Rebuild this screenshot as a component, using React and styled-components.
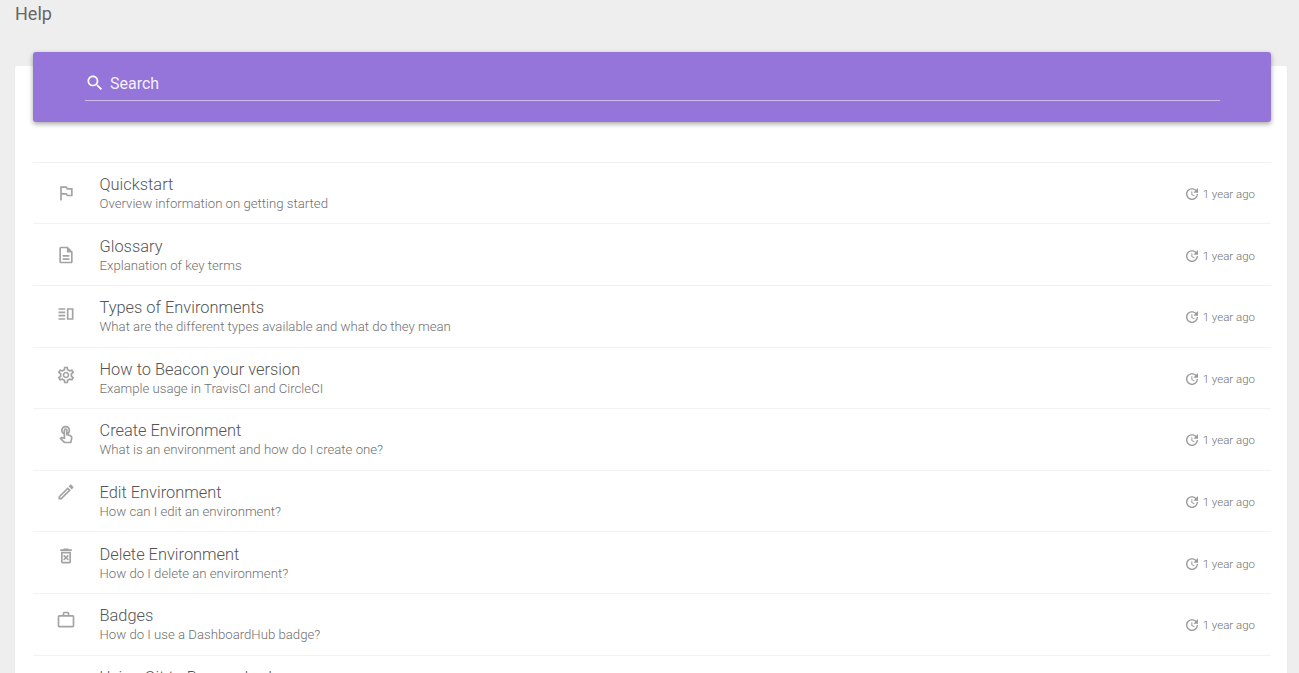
import React from 'react';
import styled, { createGlobalStyle } from 'styled-components';

const GlobalStyle = createGlobalStyle`
    html, body {
        margin: 0;
        height: 100%;
        overflow: hidden;
        background: #eeeeee;
        font-family: Roboto, 'Liberation Sans', sans-serif;
    }
`;

const icons = {
    flag: 'M14 6l-1-2H5v17h2v-7h5l1 2h7V6h-6zm4 8h-4l-1-2H7V6h5l1 2h5v6z',
    doc: 'M8 16h8v2H8zm0-4h8v2H8zm6-10H6c-1.1 0-2 .9-2 2v16c0 1.1.89 2 1.99 2H18c1.1 0 2-.9 2-2V8l-6-6zm4 18H6V4h7v5h5v11z',
    split: 'M3 13h8v2H3zm0 4h8v2H3zm0-8h8v2H3zm0-4h8v2H3zm16 2v10h-4V7h4m2-2h-8v14h8V5z',
    settings:
        'M19.43 12.98c.04-.32.07-.64.07-.98 0-.34-.03-.66-.07-.98l2.11-1.65c.19-.15.24-.42.12-.64l-2-3.46c-.09-.16-.26-.25-.44-.25-.06 0-.12.01-.17.03l-2.49 1c-.52-.4-1.08-.73-1.69-.98l-.38-2.65C14.46 2.18 14.25 2 14 2h-4c-.25 0-.46.18-.49.42l-.38 2.65c-.61.25-1.17.59-1.69.98l-2.49-1c-.06-.02-.12-.03-.18-.03-.17 0-.34.09-.43.25l-2 3.46c-.13.22-.07.49.12.64l2.11 1.65c-.04.32-.07.65-.07.98 0 .33.03.66.07.98l-2.11 1.65c-.19.15-.24.42-.12.64l2 3.46c.09.16.26.25.44.25.06 0 .12-.01.17-.03l2.49-1c.52.4 1.08.73 1.69.98l.38 2.65c.03.24.24.42.49.42h4c.25 0 .46-.18.49-.42l.38-2.65c.61-.25 1.17-.59 1.69-.98l2.49 1c.06.02.12.03.18.03.17 0 .34-.09.43-.25l2-3.46c.12-.22.07-.49-.12-.64l-2.11-1.65zm-1.98-1.71c.04.31.05.52.05.73 0 .21-.02.43-.05.73l-.14 1.13.89.7 1.08.84-.7 1.21-1.27-.51-1.04-.42-.9.68c-.43.32-.84.56-1.25.73l-1.06.43-.16 1.13-.2 1.35h-1.4l-.19-1.35-.16-1.13-1.06-.43c-.43-.18-.83-.41-1.23-.71l-.91-.7-1.06.43-1.27.51-.7-1.21 1.08-.84.89-.7-.14-1.13c-.03-.31-.05-.54-.05-.74s.02-.43.05-.73l.14-1.13-.89-.7-1.08-.84.7-1.21 1.27.51 1.04.42.9-.68c.43-.32.84-.56 1.25-.73l1.06-.43.16-1.13.2-1.35h1.39l.19 1.35.16 1.13 1.06.43c.43.18.83.41 1.23.71l.91.7 1.06-.43 1.27-.51.7 1.21-1.07.85-.89.7.14 1.13zM12 8c-2.21 0-4 1.79-4 4s1.79 4 4 4 4-1.79 4-4-1.79-4-4-4zm0 6c-1.1 0-2-.9-2-2s.9-2 2-2 2 .9 2 2-.9 2-2 2z',
    touch:
        'M18.19 12.44l-3.24-1.62c1.29-1 2.12-2.56 2.12-4.32C17.07 3.47 14.6 1 11.57 1S6.07 3.47 6.07 6.5c0 2.13 1.22 3.98 3 4.89v3.26c-2.15-.46-2.02-.44-2.26-.44-.53 0-1.03.21-1.41.59L4 16.22l5.09 5.09c.43.44 1.03.69 1.65.69h6.3c.98 0 1.81-.7 1.97-1.67l.8-4.71c.22-1.3-.43-2.58-1.62-3.18zm-.35 2.85l-.8 4.71h-6.3c-.09 0-.17-.04-.24-.1l-3.68-3.68 4.25.89V6.5c0-.28.22-.5.5-.5s.5.22.5.5v6h1.76l3.46 1.73c.4.2.62.63.55 1.06zM8.07 6.5c0-1.93 1.57-3.5 3.5-3.5s3.5 1.57 3.5 3.5c0 .95-.38 1.81-1 2.44V6.5c0-1.38-1.12-2.5-2.5-2.5s-2.5 1.12-2.5 2.5v2.44c-.62-.63-1-1.49-1-2.44z',
    edit: 'M3 17.25V21h3.75L17.81 9.94l-3.75-3.75L3 17.25zM5.92 19H5v-.92l9.06-9.06.92.92L5.92 19zM20.71 5.63l-2.34-2.34c-.2-.2-.45-.29-.71-.29s-.51.1-.7.29l-1.83 1.83 3.75 3.75 1.83-1.83c.39-.39.39-1.02 0-1.41z',
    trash: 'M14.12 10.47L12 12.59l-2.13-2.12-1.41 1.41L10.59 14l-2.12 2.12 1.41 1.41L12 15.41l2.12 2.12 1.41-1.41L13.41 14l2.12-2.12zM15.5 4l-1-1h-5l-1 1H5v2h14V4zM6 19c0 1.1.9 2 2 2h8c1.1 0 2-.9 2-2V7H6v12zM8 9h8v10H8V9z',
    work: 'M14 6V4h-4v2h4zM4 8v11h16V8H4zm16-2c1.11 0 2 .89 2 2v11c0 1.11-.89 2-2 2H4c-1.11 0-2-.89-2-2l.01-11c0-1.11.88-2 1.99-2h4V4c0-1.11.89-2 2-2h4c1.11 0 2 .89 2 2v2h4z',
    update: 'M21 10.12h-6.78l2.74-2.82c-2.73-2.7-7.15-2.8-9.88-.1-2.73 2.71-2.73 7.08 0 9.79s7.15 2.71 9.88 0C18.32 15.65 19 14.08 19 12.1h2c0 1.98-.88 4.55-2.64 6.29-3.51 3.48-9.21 3.48-12.72 0-3.5-3.47-3.53-9.11-.02-12.58s9.14-3.47 12.65 0L21 3v7.12zM12.5 8v4.25l3.5 2.08-.72 1.21L11 13V8h1.5z',
    search: 'M15.5 14h-.79l-.28-.27C15.41 12.59 16 11.11 16 9.5 16 5.91 13.09 3 9.5 3S3 5.91 3 9.5 5.91 16 9.5 16c1.61 0 3.09-.59 4.23-1.57l.27.28v.79l5 4.99L20.49 19l-4.99-5zm-6 0C7.01 14 5 11.99 5 9.5S7.01 5 9.5 5 14 7.01 14 9.5 11.99 14 9.5 14z',
};

const topics = [
    { icon: 'flag', lift: 0, title: 'Quickstart', text: 'Overview information on getting started' },
    { icon: 'doc', lift: 0, title: 'Glossary', text: 'Explanation of key terms' },
    { icon: 'split', lift: 2, title: 'Types of Environments', text: 'What are the different types available and what do they mean' },
    { icon: 'settings', lift: 3, title: 'How to Beacon your version', text: 'Example usage in TravisCI and CircleCI' },
    { icon: 'touch', lift: 4, title: 'Create Environment', text: 'What is an environment and how do I create one?' },
    { icon: 'edit', lift: 9, title: 'Edit Environment', text: 'How can I edit an environment?' },
    { icon: 'trash', lift: 7, title: 'Delete Environment', text: 'How do I delete an environment?' },
    { icon: 'work', lift: 4, title: 'Badges', text: 'How do I use a DashboardHub badge?' },
    { icon: 'doc', lift: 0, title: 'Using Git to Beacon badges', text: 'How do I use Git to Beacon?' },
];

const Page = styled.div`
    height: 673px;
    overflow: hidden;
    padding: 0 12px 0 15px;
`;

const PageTitle = styled.h1`
    margin: 0;
    height: 66px;
    padding-top: 3px;
    box-sizing: border-box;
    font-size: 18px;
    font-weight: 400;
    line-height: 21px;
    color: #666;
`;

const Card = styled.div`
    display: flow-root;
    background: #fff;
    border-radius: 3px;
    padding: 0 16px 0 18px;
    box-shadow: 0 1px 2px rgba(0, 0, 0, 0.05);
`;

const SearchBar = styled.div`
    margin-top: -14px;
    position: relative;
    height: 70px;
    box-sizing: border-box;
    padding: 18px 51px 0 52px;
    background: #9575d9;
    border-radius: 3px;
    box-shadow: 0 2px 5px rgba(0, 0, 0, 0.35);
`;

const SearchField = styled.div`
    display: flex;
    align-items: center;
    height: 26px;
    padding-bottom: 4px;
    gap: 5px;
    border-bottom: 1px solid #cdbcee;
    color: rgba(255, 255, 255, 0.92);
    font-size: 16px;
`;

const Icon = styled.svg`
    display: block;
    flex: none;
    width: ${props => props.size}px;
    height: ${props => props.size}px;
    fill: ${props => props.color};
`;

const List = styled.div`
    margin-top: 39.6px;
`;

const Row = styled.div`
    display: flex;
    align-items: center;
    height: 61.65px;
    box-sizing: border-box;
    border-top: 1px solid #f2f2f2;
`;

const IconCell = styled.div`
    width: 66.5px;
    padding-left: 23px;
    margin-bottom: ${props => props.lift * 2}px;
    box-sizing: border-box;
    flex: none;
`;

const Body = styled.div`
    flex: 1;
    min-width: 0;
    padding-top: 1px;
`;

const Title = styled.div`
    font-size: 16.4px;
    font-weight: 300;
    line-height: 20px;
    color: #555;
`;

const Text = styled.div`
    font-size: 13.2px;
    font-weight: 300;
    line-height: 17px;
    color: #707070;
`;

const Time = styled.div`
    display: flex;
    align-items: center;
    gap: 3px;
    padding: 2px 16px 0 0;
    font-size: 11.5px;
    font-weight: 300;
    color: #707070;
`;

const Glyph = ({ name, size = 20, color = '#a3a3a3' }) => (
    <Icon viewBox="0 0 24 24" size={size} color={color}>
        <path d={icons[name]} />
    </Icon>
);

const App = () => {
    return (
        <Page>
            <GlobalStyle />
            <PageTitle>Help</PageTitle>
            <Card>
                <SearchBar>
                    <SearchField>
                        <Glyph name="search" size={20} color="#fff" />
                        Search
                    </SearchField>
                </SearchBar>
                <List>
                    {topics.map(topic => (
                        <Row key={topic.title}>
                            <IconCell lift={topic.lift}>
                                <Glyph name={topic.icon} />
                            </IconCell>
                            <Body>
                                <Title>{topic.title}</Title>
                                <Text>{topic.text}</Text>
                            </Body>
                            <Time>
                                <Glyph name="update" size={16} color="#9a9a9a" />1 year ago
                            </Time>
                        </Row>
                    ))}
                </List>
            </Card>
        </Page>
    );
};

export default App;
